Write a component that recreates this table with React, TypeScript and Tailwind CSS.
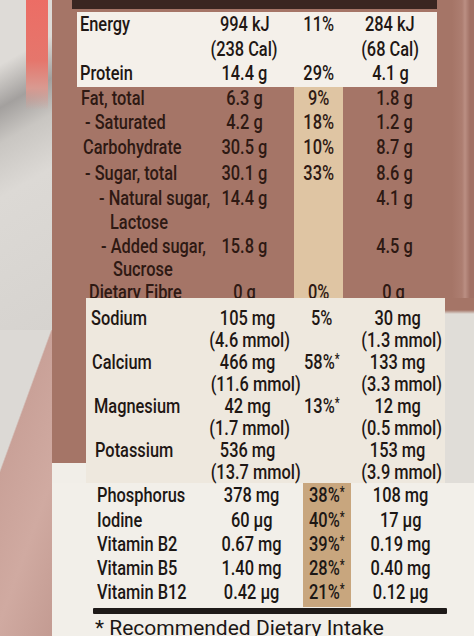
import clsx from 'clsx'
import type { ReactNode } from 'react'

// condensed label type: a medium sans squeezed horizontally
function T({ children, left = false }: { children?: ReactNode; left?: boolean }) {
  return (
    <span className={clsx('inline-block whitespace-nowrap scale-x-78', left ? 'origin-left' : 'origin-center')}>
      {children}
    </span>
  )
}

function Star() {
  return <span className="relative -top-[5px] text-[14px]">*</span>
}

type Row = { l?: string; pl?: string; v?: string; d?: ReactNode; p?: string; h: string }

const whiteRows: Row[] = [
  { l: 'Energy', pl: 'pl-[3px]', v: '994 kJ', d: '11%', p: '284 kJ', h: 'h-[25px] leading-[25px]' },
  { v: '(238 Cal)', p: '(68 Cal)', h: 'h-[24px] leading-[24px]' },
  { l: 'Protein', pl: 'pl-[3px]', v: '14.4 g', d: '29%', p: '4.1 g', h: 'h-[24px] leading-[24px]' },
]

const brownRows: Row[] = [
  { l: 'Fat, total', pl: 'pl-[4px]', v: '6.3 g', d: '9%', p: '1.8 g', h: 'h-[23px] leading-[23px]' },
  { l: '- Saturated', pl: 'pl-[8px]', v: '4.2 g', d: '18%', p: '1.2 g', h: 'h-[25px] leading-[25px]' },
  { l: 'Carbohydrate', pl: 'pl-[6px]', v: '30.5 g', d: '10%', p: '8.7 g', h: 'h-[25px] leading-[25px]' },
  { l: '- Sugar, total', pl: 'pl-[8px]', v: '30.1 g', d: '33%', p: '8.6 g', h: 'h-[26px] leading-[26px]' },
  { l: '- Natural sugar,', pl: 'pl-[22px]', v: '14.4 g', p: '4.1 g', h: 'h-[25px] leading-[25px]' },
  { l: 'Lactose', pl: 'pl-[33px]', h: 'h-[23px] leading-[23px]' },
  { l: '- Added sugar,', pl: 'pl-[24px]', v: '15.8 g', p: '4.5 g', h: 'h-[25px] leading-[25px]' },
  { l: 'Sucrose', pl: 'pl-[36px]', h: 'h-[21px] leading-[21px]' },
  { l: 'Dietary Fibre', pl: 'pl-[12px]', v: '0 g', d: '0%', p: '0 g', h: 'h-[18px] leading-[24px]' },
]

const mineralRows: Row[] = [
  { l: 'Sodium', pl: 'pl-[5px]', v: '105 mg', d: '5%', p: '30 mg', h: 'h-[22px]' },
  { v: '(4.6 mmol)', p: '(1.3 mmol)', h: 'h-[22px]' },
  { l: 'Calcium', pl: 'pl-[6px]', v: '466 mg', d: <>58%<Star /></>, p: '133 mg', h: 'h-[22px]' },
  { v: '(11.6 mmol)', p: '(3.3 mmol)', h: 'h-[22px]' },
  { l: 'Magnesium', pl: 'pl-[8px]', v: '42 mg', d: <>13%<Star /></>, p: '12 mg', h: 'h-[22px]' },
  { v: '(1.7 mmol)', p: '(0.5 mmol)', h: 'h-[22px]' },
  { l: 'Potassium', pl: 'pl-[9px]', v: '536 mg', p: '153 mg', h: 'h-[22px]' },
  { v: '(13.7 mmol)', p: '(3.9 mmol)', h: 'h-[22px]' },
]

const vitaminRows: Row[] = [
  { l: 'Phosphorus', v: '378 mg', d: <>38%<Star /></>, p: '108 mg', h: 'h-[25px] leading-[25px]' },
  { l: 'Iodine', v: '60 µg', d: <>40%<Star /></>, p: '17 µg', h: 'h-[24px] leading-[24px]' },
  { l: 'Vitamin B2', v: '0.67 mg', d: <>39%<Star /></>, p: '0.19 mg', h: 'h-[24px] leading-[24px]' },
  { l: 'Vitamin B5', v: '1.40 mg', d: <>28%<Star /></>, p: '0.40 mg', h: 'h-[24px] leading-[24px]' },
  { l: 'Vitamin B12', v: '0.42 µg', d: <>21%<Star /></>, p: '0.12 µg', h: 'h-[27px] leading-[24px]' },
]

export default function App() {
  return (
    <div className="w-[474px] h-[636px] overflow-hidden flex bg-[#dad7d3] font-['Roboto','Liberation_Sans',Arial,sans-serif] font-medium text-[21px]">
      {/* background beside the carton: wall, red packet edge, thumb */}
      <div className="w-[52px] shrink-0 flex flex-col">
        <div className="h-[330px] bg-[linear-gradient(150deg,#dedbd7_18%,#a3a09e_30%,#c9c6c2_40%,#dcd9d5_55%,#d6d3cf_100%)]">
          <div className="ml-[26px] w-[22px] h-[110px] bg-[linear-gradient(to_bottom,#ec6d65,#e5766c_55%,#d99a91_80%,transparent)]" />
        </div>
        <div className="flex-1 bg-[linear-gradient(110deg,#dcd9d5_31%,#c9a198_32%,#d0aaa1_65%,#c39b92)]" />
      </div>

      {/* carton */}
      <div className="flex-1 flex flex-col bg-[#a57567]">
        {/* top: energy, macros */}
        <div className="h-[298px] shrink-0 bg-[linear-gradient(to_right,#a57567_0,#a57567_400px,#ad7e71_410px,#bb8f83_413px,#a17165_418px)]">
          <div className="ml-[20px] w-[365px] h-[9px] bg-[#3a2621]" />
          <div className="mt-[3px] ml-[25px] w-[360px] h-[75px] bg-[#f4f0ea] text-[#1f1714]">
            {whiteRows.map((r, i) => (
              <div key={i} className={clsx('grid grid-cols-[118px_99px_49px_94px]', r.h)}>
                <div className={r.pl}><T left>{r.l}</T></div>
                <div className="text-center"><T>{r.v}</T></div>
                <div className="text-center"><T>{r.d}</T></div>
                <div className="text-center"><T>{r.p}</T></div>
              </div>
            ))}
          </div>
          <div className="ml-[25px] text-[#2e1913]">
            {brownRows.map((r, i) => (
              <div key={i} className={clsx('grid grid-cols-[118px_99px_49px_102px]', r.h)}>
                <div className={r.pl}><T left>{r.l}</T></div>
                <div className="text-center"><T>{r.v}</T></div>
                <div className="text-center bg-[#dfc5a3]"><T>{r.d}</T></div>
                <div className="text-center"><T>{r.p}</T></div>
              </div>
            ))}
          </div>
        </div>

        {/* minerals on the cream panel */}
        <div className="relative h-[185px] shrink-0 flex">
          <div className="w-[34px] shrink-0 bg-[linear-gradient(to_bottom,#a57567_165px,#f1eee8_165px)]" />
          <div className="w-[359px] shrink-0 bg-[#eee8de] pt-[9px] text-[#1f1714] leading-[22px]">
            {mineralRows.map((r, i) => (
              <div key={i} className={clsx('grid grid-cols-[112px_100px_48px_99px]', r.h)}>
                <div className={r.pl}><T left>{r.l}</T></div>
                <div className="text-center"><T>{r.v}</T></div>
                <div className="text-center"><T>{r.d}</T></div>
                <div className="text-center pl-[4px]"><T>{r.p}</T></div>
              </div>
            ))}
          </div>
          <div className="flex-1 bg-[linear-gradient(to_bottom,#a57567_12px,#e0ddd8_16px)]" />
        </div>

        {/* vitamins */}
        <div className="flex-1 bg-[#f2efe9] text-[#1c1715]">
          <div className="ml-[41px]">
            {vitaminRows.map((r, i) => (
              <div key={i} className={clsx('grid grid-cols-[107px_103px_48px_100px]', r.h)}>
                <div className="pl-[4px]"><T left>{r.l}</T></div>
                <div className="text-center"><T>{r.v}</T></div>
                <div className="text-center bg-[#c8a67e]"><T>{r.d}</T></div>
                <div className="text-center"><T>{r.p}</T></div>
              </div>
            ))}
            <div className="mt-[1px] w-[354px] h-[6px] rounded-[1px] bg-[#1e1a18]" />
            <div className="mt-[2px] ml-[2px] leading-[24px] text-[21px] font-normal whitespace-nowrap">* Recommended Dietary Intake</div>
          </div>
        </div>
      </div>
    </div>
  )
}
